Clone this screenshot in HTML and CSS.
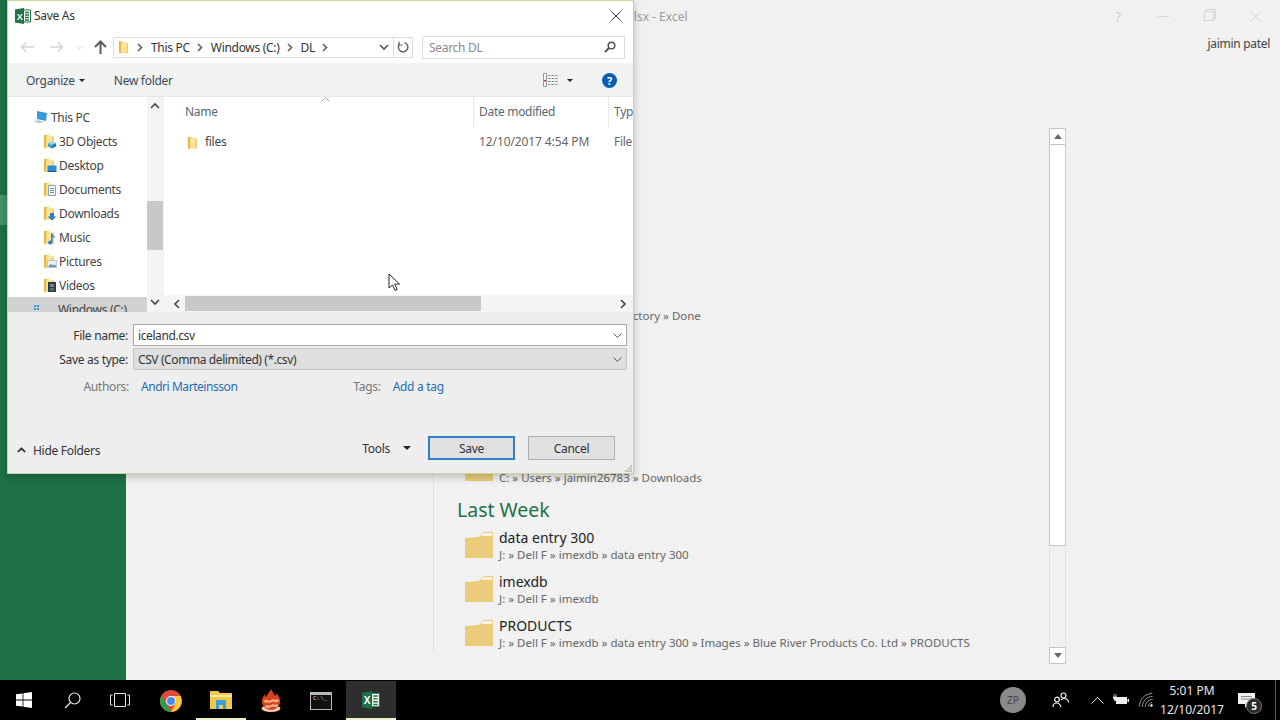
FILE: index.html
```html
<!DOCTYPE html>
<html lang="en">
<head>
    <meta charset="UTF-8">
    <title>Save As</title>
    <link rel="stylesheet" href="styles.css">
</head>
<body>

    <svg class="defs" width="0" height="0">
        <symbol id="folder" viewBox="0 0 12 14">
            <path d="M1 1h5v1.500h5v11H1z" fill="#f3d06f"/>
            <path d="M1 1h2.500v12.500H1z" fill="#e6b84a"/>
            <path d="M3.500 2.500L9 1.500v11l-5.500 1z" fill="#fbe59c"/>
        </symbol>
        <symbol id="excel" viewBox="0 0 16 16">
            <path d="M6 2h9.500v12H6z" fill="#fff" stroke="#1e7145"/>
            <path d="M10 4.500h4M10 7h4M10 9.500h4M10 12h4" stroke="#1e7145" stroke-width="1.300"/>
            <path d="M0 1.500L9 0v16l-9-1.500z" fill="#1e7145"/>
            <text x="4.500" y="11.500" class="excel-x">X</text>
        </symbol>
        <symbol id="big-folder" viewBox="0 0 28 26">
            <path d="M0 6l14-1 5-5h9v26H0z" fill="#eccb7b"/>
            <path d="M19 1h8v3h-11z" fill="#f9f3e2"/>
        </symbol>
        <symbol id="chev" viewBox="0 0 6 9">
            <path d="M1 1l3.500 3.500L1 8" fill="none" stroke="#666" stroke-width="1.700"/>
        </symbol>
    </svg>

    <div class="excel">
        <aside class="sidebar">
            <div class="sidebar-active"></div>
        </aside>
        <div class="backstage">
            <div class="titlebar">
                <span class="doc-title">iceland.xlsx - Excel</span>
                <div class="window-btns">
                    <span class="win-help">?</span>
                    <span class="win-min"></span>
                    <span class="win-max"></span>
                    <svg width="13" height="13" viewBox="0 0 13 13"><path d="M1 1l11 11M12 1L1 12" stroke="#d4d4d4"/></svg>
                </div>
            </div>
            <div class="account">jaimin patel</div>
            <div class="recent">
                <div class="recent-list">
                    <div class="recent-item first-item">
                        <svg class="big-icon" width="28" height="26"><use href="#big-folder"/></svg>
                        <div>
                            <div class="recent-name">Done</div>
                            <div class="recent-path">J: » Dell F » imexdb » Directory » Done</div>
                        </div>
                    </div>
                    <div class="recent-item downloads-item">
                        <svg class="big-icon" width="28" height="26"><use href="#big-folder"/></svg>
                        <div>
                            <div class="recent-name">Downloads</div>
                            <div class="recent-path">C: » Users » jaimin26783 » Downloads</div>
                        </div>
                    </div>
                    <h2 class="recent-head">Last Week</h2>
                    <div class="recent-item">
                        <svg class="big-icon" width="28" height="26"><use href="#big-folder"/></svg>
                        <div>
                            <div class="recent-name">data entry 300</div>
                            <div class="recent-path">J: » Dell F » imexdb » data entry 300</div>
                        </div>
                    </div>
                    <div class="recent-item">
                        <svg class="big-icon" width="28" height="26"><use href="#big-folder"/></svg>
                        <div>
                            <div class="recent-name">imexdb</div>
                            <div class="recent-path">J: » Dell F » imexdb</div>
                        </div>
                    </div>
                    <div class="recent-item">
                        <svg class="big-icon" width="28" height="26"><use href="#big-folder"/></svg>
                        <div>
                            <div class="recent-name">PRODUCTS</div>
                            <div class="recent-path">J: » Dell F » imexdb » data entry 300 » Images » Blue River Products Co. Ltd » PRODUCTS</div>
                        </div>
                    </div>
                </div>
                <div class="vscroll">
                    <div class="vscroll-btn"><span class="tri-up"></span></div>
                    <div class="vscroll-thumb"></div>
                    <div class="vscroll-track"></div>
                    <div class="vscroll-btn"><span class="tri-down"></span></div>
                </div>
            </div>
        </div>
    </div>

    <!-- save dialog -->
    <div class="dialog">
        <div class="dlg-title">
            <svg class="dlg-icon" width="16" height="16"><use href="#excel"/></svg>
            <span>Save As</span>
            <svg class="dlg-close" width="12" height="12" viewBox="0 0 12 12"><path d="M.5.500l11 11M11.500.500l-11 11" stroke="#444"/></svg>
        </div>

        <div class="dlg-nav">
            <svg class="nav-arrow" width="14" height="12" viewBox="0 0 14 12"><path d="M14 6H1.500M6 1.500L1.500 6 6 10.500" fill="none" stroke="#d3d3d3" stroke-width="1.500"/></svg>
            <svg class="nav-arrow next" width="14" height="12" viewBox="0 0 14 12"><path d="M0 6h12.500M8 1.500L12.500 6 8 10.500" fill="none" stroke="#d3d3d3" stroke-width="1.500"/></svg>
            <svg class="nav-recent" width="7" height="5" viewBox="0 0 7 5"><path d="M.5 1l3 3 3-3" fill="none" stroke="#d8d8d8"/></svg>
            <svg class="nav-up" width="13" height="14" viewBox="0 0 13 14"><path d="M6.500 14V2M1 7l5.500-5.500L12 7" fill="none" stroke="#5b5b5b" stroke-width="2"/></svg>
            <div class="address">
                <svg class="addr-folder" width="11" height="14"><use href="#folder"/></svg>
                <svg class="crumb-sep first" width="6" height="9"><use href="#chev"/></svg>
                <span class="crumb">This PC</span>
                <svg class="crumb-sep" width="6" height="9"><use href="#chev"/></svg>
                <span class="crumb">Windows (C:)</span>
                <svg class="crumb-sep" width="6" height="9"><use href="#chev"/></svg>
                <span class="crumb">DL</span>
                <svg class="crumb-sep" width="6" height="9"><use href="#chev"/></svg>
                <svg class="addr-drop" width="10" height="7" viewBox="0 0 10 7"><path d="M1 1l4 4 4-4" fill="none" stroke="#555" stroke-width="1.600"/></svg>
                <div class="addr-refresh">
                    <svg width="12" height="12" viewBox="0 0 12 12"><path d="M7.500 1.600A4.700 4.700 0 1 1 2.600 3" fill="none" stroke="#666" stroke-width="1.500"/><path d="M2 .500v3.500h3.500" fill="none" stroke="#666" stroke-width="1.200"/></svg>
                </div>
            </div>
            <div class="search">
                <span>Search DL</span>
                <svg width="12" height="12" viewBox="0 0 12 12"><circle cx="7.500" cy="4.500" r="3.300" fill="none" stroke="#555" stroke-width="1.500"/><path d="M5 7l-4 4" stroke="#555" stroke-width="2"/></svg>
            </div>
        </div>

        <div class="dlg-toolbar">
            <span class="tool-item">Organize</span>
            <span class="caret organize-caret"></span>
            <span class="tool-item new-folder">New folder</span>
            <svg class="view-icon" width="15" height="14" viewBox="0 0 15 14"><path d="M5 2.500h10M5 5.500h10M5 8.500h10M5 11.500h10" stroke="#8c9096" stroke-dasharray="2.500 1"/><path d="M.5.500h3v13h-3z" fill="#f6f6f6" stroke="#9a9a9a"/><path d="M1 7h2v1.500H1z" fill="#c0392b"/></svg>
            <span class="caret view-caret"></span>
            <span class="help">?</span>
        </div>

        <div class="dlg-body">
            <div class="tree-wrap">
                <div class="tree">
                    <div class="tree-item root">
                        <svg width="15" height="14" viewBox="0 0 15 14"><path d="M4 1l10 2-1 8-9-2z" fill="#3a9ad9"/><path d="M0 11l6-1 5 2-5 1.500z" fill="#c6ccd2"/></svg>
                        <span>This PC</span>
                    </div>
                    <div class="tree-item">
                        <svg width="14" height="15" viewBox="0 0 14 15"><use href="#folder" width="12" height="14"/><path d="M5 9l4-2 4 2-4 2z" fill="#8fdcf0"/><path d="M5 9l4 2v3.500l-4-2z" fill="#37a6cf"/><path d="M13 9l-4 2v3.500l4-2z" fill="#1c7eb2"/></svg>
                        <span>3D Objects</span>
                    </div>
                    <div class="tree-item">
                        <svg width="14" height="15" viewBox="0 0 14 15"><use href="#folder" width="12" height="14"/><path d="M4.500 7.500h9v5.500h-9z" fill="#2b8fd8"/><path d="M4.500 13h9v1h-9z" fill="#234f70"/></svg>
                        <span>Desktop</span>
                    </div>
                    <div class="tree-item">
                        <svg width="14" height="15" viewBox="0 0 14 15"><use href="#folder" width="12" height="14"/><path d="M5.500 3.500h7v10h-7z" fill="#eef4f7" stroke="#8aa2b2"/><path d="M7 6.500h4M7 8.500h4M7 10.500h4" stroke="#6d93ad"/></svg>
                        <span>Documents</span>
                    </div>
                    <div class="tree-item">
                        <svg width="14" height="15" viewBox="0 0 14 15"><use href="#folder" width="12" height="14"/><path d="M7 7h4v3.500h2.500L9 14.500 4.500 10.500H7z" fill="#2f7fc8"/></svg>
                        <span>Downloads</span>
                    </div>
                    <div class="tree-item">
                        <svg width="14" height="15" viewBox="0 0 14 15"><use href="#folder" width="12" height="14"/><path d="M8 3.500h1.500c0 2 3 2.500 3 5-1-1.500-2-1.700-3-1.800V12.500a2.200 2 0 1 1-1.500-1.900z" fill="#2e86c8"/></svg>
                        <span>Music</span>
                    </div>
                    <div class="tree-item">
                        <svg width="14" height="15" viewBox="0 0 14 15"><use href="#folder" width="12" height="14"/><path d="M4.500 6.500h9v7h-9z" fill="#e8f0f4" stroke="#9fb2bd" stroke-width=".6"/><path d="M5 13l3-3 2 1.500 1.500-1 1.500 1.500v1z" fill="#5c94b8"/></svg>
                        <span>Pictures</span>
                    </div>
                    <div class="tree-item">
                        <svg width="14" height="15" viewBox="0 0 14 15"><use href="#folder" width="12" height="14"/><path d="M5 4h8v10H5z" fill="#2f3c46"/><path d="M7 6h4v3H7z" fill="#6f8797"/><path d="M7 10h4v2.500H7z" fill="#56707f"/></svg>
                        <span>Videos</span>
                    </div>
                    <div class="tree-item selected">
                        <svg class="drive" width="21" height="12" viewBox="0 0 21 12"><path d="M1 2h2v2H1zM4 2h2v2H4zM1 5h2v2H1zM4 5h2v2H4z" fill="#2aa0e0"/><path d="M13 9h7v2h-7z" fill="#a9a9a9"/></svg>
                        <span>Windows (C:)</span>
                    </div>
                </div>
                <div class="tree-scroll">
                    <svg width="10" height="7" viewBox="0 0 10 7"><path d="M1 6l4-4 4 4" fill="none" stroke="#444" stroke-width="1.600"/></svg>
                    <div class="tree-thumb"></div>
                    <svg width="10" height="7" viewBox="0 0 10 7"><path d="M1 1l4 4 4-4" fill="none" stroke="#444" stroke-width="1.600"/></svg>
                </div>
            </div>
            <div class="files">
                <div class="files-head">
                    <div class="col col-name">Name<svg class="sort" width="9" height="5" viewBox="0 0 9 5"><path d="M.5 4.500l4-4 4 4" fill="none" stroke="#aaa"/></svg></div>
                    <div class="col col-date">Date modified</div>
                    <div class="col col-type">Type</div>
                </div>
                <div class="file-row">
                    <div class="col col-name file-name"><svg width="11" height="13"><use href="#folder"/></svg><span>files</span></div>
                    <div class="col col-date">12/10/2017 4:54 PM</div>
                    <div class="col col-type">File folder</div>
                </div>
                <div class="hscroll">
                    <svg width="7" height="10" viewBox="0 0 7 10"><path d="M6 1L2 5l4 4" fill="none" stroke="#444" stroke-width="1.600"/></svg>
                    <div class="hscroll-thumb"></div>
                    <svg width="7" height="10" viewBox="0 0 7 10"><path d="M1 1l4 4-4 4" fill="none" stroke="#444" stroke-width="1.600"/></svg>
                </div>
            </div>
        </div>

        <div class="dlg-form">
            <div class="form-row">
                <label>File name:</label>
                <div class="field"><span>iceland.csv</span><svg width="9" height="5" viewBox="0 0 9 5"><path d="M.5.500l4 4 4-4" fill="none" stroke="#555"/></svg></div>
            </div>
            <div class="form-row">
                <label>Save as type:</label>
                <div class="field type-field"><span>CSV (Comma delimited) (*.csv)</span><svg width="9" height="5" viewBox="0 0 9 5"><path d="M.5.500l4 4 4-4" fill="none" stroke="#555"/></svg></div>
            </div>
            <div class="meta-row">
                <span class="meta-label authors">Authors:</span>
                <a class="meta-link">Andri Marteinsson</a>
                <span class="meta-label tags">Tags:</span>
                <a class="meta-link">Add a tag</a>
            </div>
            <div class="dlg-foot">
                <svg class="hide-caret" width="9" height="6" viewBox="0 0 9 6"><path d="M.8 5l3.700-3.500L8.200 5" fill="none" stroke="#222" stroke-width="1.700"/></svg>
                <span class="hide-label">Hide Folders</span>
                <span class="tools">Tools</span>
                <span class="caret tools-caret"></span>
                <button class="btn btn-save">Save</button>
                <button class="btn">Cancel</button>
            </div>
            <svg class="grip" width="7" height="7" viewBox="0 0 7 7"><path d="M5 0h2v2H5zM2.500 2.500h2v2h-2zM5 2.500h2v2H5zM0 5h2v2H0zM2.500 5h2v2h-2zM5 5h2v2H5z" fill="#bdbdbd"/></svg>
        </div>
    </div>

    <!-- mouse pointer -->
    <svg class="pointer" width="13" height="19" viewBox="0 0 13 19"><path d="M1 1v14l3.500-3 2.500 5.500 2.200-1-2.500-5.300 4.800-.2z" fill="#fff" stroke="#222"/></svg>

    <div class="taskbar">
        <div class="task-btn">
            <svg width="16" height="16" viewBox="0 0 16 16"><path d="M0 2.300L6.600 1.400V7.600H0zM7.400 1.300L16 0V7.600H7.400zM0 8.400H6.600V14.600L0 13.700zM7.400 8.400H16V16L7.400 14.700z" fill="#fff"/></svg>
        </div>
        <div class="task-btn">
            <svg width="17" height="17" viewBox="0 0 17 17"><circle cx="10.500" cy="6.500" r="5.500" fill="none" stroke="#e8e8e8" stroke-width="1.200"/><path d="M6.500 10.500L1 16" stroke="#e8e8e8" stroke-width="1.300"/></svg>
        </div>
        <div class="task-btn">
            <svg width="20" height="14" viewBox="0 0 20 14"><path d="M4.500.500h11v13h-11z" fill="none" stroke="#e8e8e8"/><path d="M2.500 2H.500v10h2M17.500 2h2v10h-2" fill="none" stroke="#e8e8e8"/></svg>
        </div>
        <div class="task-app chrome">
            <svg width="22" height="22" viewBox="0 0 22 22">
                <circle cx="11" cy="11" r="11" fill="#de4b3c"/>
                <path d="M1.500 5.500L7 15l4 7A11 11 0 0 1 1.500 5.500z" fill="#2d9e4b"/>
                <path d="M11 6h9.500A11 11 0 0 1 11 22l5-9z" fill="#fbc934"/>
                <circle cx="11" cy="11" r="5" fill="#fff"/>
                <circle cx="11" cy="11" r="4" fill="#4a8af4"/>
            </svg>
        </div>
        <div class="task-app running">
            <svg width="22" height="18" viewBox="0 0 22 18">
                <path d="M0 0h8l2 2h12v16H0z" fill="#f2c84b"/>
                <path d="M0 4h22v2H0z" fill="#fbe8a2"/>
                <path d="M6 9h10v9h-3v-4H9v4H6z" fill="#3aa0dc"/>
            </svg>
        </div>
        <div class="task-app">
            <svg width="20" height="23" viewBox="0 0 20 23">
                <ellipse cx="10" cy="19.500" rx="9.500" ry="3.500" fill="#f3c9b4"/>
                <path d="M10 0c1 3 3 4 4 7 1-1 2-2 2-3 2 4 4 7 3 10-1 4-5 7-9 7s-8-3-9-7c-1-3 1-6 3-9 0 1 0 2 1 3 1-3 4-5 5-8z" fill="#d8431f"/>
                <path d="M3 12c3-3 4 1 7-1s4 1 7-1l1 2c-3 3-5-1-8 1s-4-1-6 1zM4 17c3-2 4 1 6-1s4 1 6-1l1 2c-3 2-5 0-7 1-2 2-3 0-5 1z" fill="#f7b48c"/>
            </svg>
        </div>
        <div class="task-app">
            <div class="cmd-icon"><span>C:\_</span></div>
        </div>
        <div class="task-app running active">
            <svg width="22" height="18" viewBox="0 0 16 16"><use href="#excel"/></svg>
        </div>

        <div class="tray">
            <div class="avatar">ZP</div>
            <svg class="tray-people" width="18" height="16" viewBox="0 0 18 16"><circle cx="11.500" cy="3.500" r="2.500" fill="none" stroke="#eee" stroke-width="1.200"/><circle cx="5" cy="7.500" r="2.300" fill="none" stroke="#eee" stroke-width="1.200"/><path d="M1 15c0-3 2-4 4-4s3 1 4 4M9 8c1-1 2-1.500 3-1.500 2 0 4 1 5 4" fill="none" stroke="#eee" stroke-width="1.200"/></svg>
            <svg class="tray-chevron" width="13" height="7" viewBox="0 0 13 7"><path d="M.5 6.500l6-6 6 6" fill="none" stroke="#e8e8e8"/></svg>
            <svg class="tray-battery" width="16" height="12" viewBox="0 0 16 12"><path d="M3 3h11v7H3z" fill="#eee"/><path d="M14.500 5h1.500v3h-1.500z" fill="#eee"/><path d="M1 0v3M3 0v3M0 3h4v2l-2 2z" stroke="#eee" fill="#eee" stroke-width=".7"/></svg>
            <svg class="tray-wifi" width="14" height="14" viewBox="0 0 14 14"><path d="M.500 13.500A13 13 0 0 1 13.500.500M3.500 13.500a10 10 0 0 1 10-10M6.500 13.500a7 7 0 0 1 7-7M9.500 13.500a4 4 0 0 1 4-4" fill="none" stroke="#cfcfcf" stroke-dasharray="1.500 .5"/><circle cx="12.500" cy="12.500" r="1.200" fill="#fff"/></svg>
            <div class="clock">
                <div>5:01 PM</div>
                <div>12/10/2017</div>
            </div>
            <div class="notify">
                <svg width="17" height="15" viewBox="0 0 17 15"><path d="M0 0h17v11h-7l-3 4v-4H0z" fill="#f2f2f2"/><path d="M3 3.500h11M3 6h11" stroke="#888"/></svg>
                <span class="notify-count">5</span>
            </div>
            <div class="show-desktop"></div>
        </div>
    </div>

</body>
</html>
```

FILE: styles.css
```css
* {
    box-sizing: border-box;
}

html,
body {
    margin: 0;
    padding: 0;
    width: 1280px;
    height: 720px;
    overflow: hidden;
}

body {
    position: relative;
    font-family: "Noto Sans", "Open Sans", sans-serif;
    font-size: 12px;
    color: #333;
    background-color: #f1f1f1;
}

.defs {
    position: absolute;
}

.excel-x {
    font-family: "Liberation Sans", sans-serif;
    font-size: 9px;
    font-weight: bold;
    fill: #fff;
    text-anchor: middle;
}

/* excel window behind the dialog */
.excel {
    display: flex;
    height: 680px;
}

.sidebar {
    flex: none;
    width: 126px;
    padding-top: 195px;
    background-color: #1e7145;
}

.sidebar-active {
    width: 7px;
    height: 30px;
    background-color: #439467;
}

.backstage {
    flex: 1;
    min-width: 0;
    display: flex;
    flex-direction: column;
}

.titlebar {
    flex: none;
    display: flex;
    align-items: center;
    height: 32px;
    padding-left: 458px;
    font-size: 12px;
    color: #9a9a9a;
}

.window-btns {
    display: flex;
    align-items: center;
    margin-left: auto;
    padding-right: 18px;
    gap: 35px;
}

.win-help {
    margin-right: 2px;
    font-size: 14px;
    color: #d4d4d4;
}

.win-min {
    width: 11px;
    border-top: 1px solid #d4d4d4;
}

.win-max {
    width: 10px;
    height: 10px;
    border: 1px solid #d4d4d4;
    box-shadow: 2px -2px 0 -1px #f1f1f1, 2px -2px 0 0 #d4d4d4;
}

.account {
    flex: none;
    height: 24px;
    padding-right: 10px;
    text-align: right;
    font-size: 12px;
    letter-spacing: -0.3px;
    line-height: 23px;
    color: #444;
}

.recent {
    flex: 1;
    min-height: 0;
    display: flex;
    align-items: flex-start;
    padding-top: 72px;
}

.recent-list {
    width: 600px;
    height: 524px;
    margin-left: 307px;
    padding-left: 23px;
    border-left: 1px solid #e2e2e2;
}

.recent-item {
    display: flex;
    gap: 6px;
    height: 44px;
    padding-left: 8px;
    padding-top: 4px;
}

.first-item {
    margin-top: 158px;
}

.downloads-item {
    margin-top: 118px;
}

.big-icon {
    flex: none;
    margin-top: 3px;
}

.recent-name {
    font-size: 14px;
    line-height: 18px;
    color: #222;
}

.recent-path {
    font-size: 11.500px;
    line-height: 16px;
    color: #666;
    white-space: nowrap;
}

.recent-head {
    margin: 5px 0 2px;
    font-size: 19.500px;
    line-height: 26px;
    font-weight: normal;
    color: #1e7145;
}

.vscroll {
    position: absolute;
    left: 1049px;
    top: 128px;
    width: 17px;
    height: 536px;
    display: flex;
    flex-direction: column;
}

.vscroll-btn {
    height: 17px;
    display: flex;
    align-items: center;
    justify-content: center;
    background-color: #fff;
    border: 1px solid #c6c6c6;
}

.vscroll-thumb {
    height: 401px;
    background-color: #fff;
    border: 1px solid #c6c6c6;
    border-top: 0;
}

.vscroll-track {
    flex: 1;
    background-color: #f1f1f1;
    border-left: 1px solid #e4e4e4;
    border-right: 1px solid #e4e4e4;
}

.tri-up {
    border: 4px solid transparent;
    border-top: 0;
    border-bottom: 5px solid #666;
}

.tri-down {
    border: 4px solid transparent;
    border-bottom: 0;
    border-top: 5px solid #666;
}

/* dialog */
.dialog {
    position: absolute;
    left: 7px;
    top: 0;
    width: 627px;
    height: 474px;
    display: flex;
    flex-direction: column;
    background-color: #fff;
    border: 1px solid #c8d59c;
    box-shadow: 0 3px 8px rgba(0, 0, 0, 0.22);
    letter-spacing: -0.3px;
}

.dlg-title {
    display: flex;
    align-items: center;
    height: 30px;
    padding: 0 11px 1px 7px;
    font-size: 12px;
    color: #333;
}

.dlg-icon {
    margin-right: 3px;
}

.dlg-close {
    margin-left: auto;
}

.dlg-nav {
    display: flex;
    align-items: center;
    height: 32px;
    padding-left: 12px;
}

.nav-arrow.next {
    margin-left: 16px;
}

.nav-recent {
    margin-left: 12px;
}

.nav-up {
    margin-left: 11px;
}

.address {
    display: flex;
    align-items: center;
    width: 300px;
    height: 21px;
    margin-left: 6px;
    padding-left: 4px;
    border: 1px solid #dcdcdc;
    font-size: 12px;
    color: #333;
}

.addr-folder {
    flex: none;
}

.crumb-sep {
    flex: none;
    margin: 0 8px 0 7px;
}

.crumb-sep.first {
    margin-left: 8px;
}

.addr-drop {
    margin-left: auto;
    margin-right: 4px;
}

.addr-refresh {
    display: flex;
    align-items: center;
    justify-content: center;
    width: 19px;
    height: 100%;
    border-left: 1px solid #dcdcdc;
}

.search {
    display: flex;
    align-items: center;
    justify-content: space-between;
    width: 203px;
    height: 23px;
    margin-left: 9px;
    padding: 0 8px 0 6px;
    border: 1px solid #dcdcdc;
    font-size: 12px;
    color: #8a8a8a;
}

.dlg-toolbar {
    display: flex;
    align-items: center;
    height: 34px;
    padding: 1px 16px 0 18px;
    background-color: #f1f3f1;
    border-bottom: 1px solid #e6e8e6;
    color: #3a4a5a;
}

.tool-item {
    font-size: 12px;
}

.new-folder {
    margin-left: 29px;
}

.caret {
    width: 0;
    height: 0;
    border: 3px solid transparent;
    border-bottom: 0;
    border-top: 3px solid #222;
}

.organize-caret {
    margin-left: 4px;
}

.view-icon {
    margin-left: auto;
}

.view-caret {
    margin-left: 9px;
}

.help {
    display: flex;
    align-items: center;
    justify-content: center;
    width: 15px;
    height: 15px;
    margin-left: 29px;
    border-radius: 50%;
    background-color: #0a5eb0;
    color: #fff;
    font-size: 11px;
    font-weight: bold;
}

.dlg-body {
    display: flex;
    height: 215px;
}

.tree-wrap {
    display: flex;
    flex: none;
    width: 156px;
}

.tree {
    width: 139px;
    height: 215px;
    overflow: hidden;
    padding-top: 8px;
    color: #444;
}

.tree-item {
    display: flex;
    align-items: center;
    height: 24px;
    padding-left: 35px;
    gap: 2px;
    font-size: 12px;
    white-space: nowrap;
}

.tree-item.root {
    padding-left: 25px;
    gap: 3px;
}

.tree-item.selected {
    background-color: #d1d1d1;
    padding-left: 25px;
    gap: 4px;
}

.tree-scroll {
    width: 17px;
    height: 215px;
    display: flex;
    flex-direction: column;
    align-items: center;
    justify-content: space-between;
    padding: 5px 1px 6px 0;
    background-color: #f4f4f4;
    position: relative;
}

.tree-thumb {
    position: absolute;
    left: 0;
    top: 104px;
    width: 16px;
    height: 49px;
    background-color: #c8c8c8;
}

.files {
    flex: 1;
    min-width: 0;
    position: relative;
    overflow: hidden;
}

.files-head {
    display: flex;
    height: 30px;
    align-items: stretch;
}

.col {
    flex: none;
    white-space: nowrap;
}

.col-name {
    width: 309px;
    padding-left: 21px;
    line-height: 30px;
}

.col-date {
    width: 135px;
    padding-left: 6px;
    line-height: 30px;
}

.col-type {
    width: 40px;
    padding-left: 6px;
    line-height: 30px;
}

.files-head .col {
    color: #5a6672;
    font-size: 12px;
}

.files-head .col-date,
.files-head .col-type {
    padding-left: 5px;
    border-left: 1px solid #e8e8e8;
}

.sort {
    position: absolute;
    left: 157px;
    top: 0;
}

.file-row {
    display: flex;
    height: 30px;
    font-size: 12px;
    color: #666;
}

.file-row .col-date {
    letter-spacing: -0.1px;
}

.file-name {
    display: flex;
    align-items: center;
    gap: 7px;
    padding-left: 23px;
    color: #444;
}

.hscroll {
    position: absolute;
    left: 0;
    right: 0;
    bottom: 0;
    height: 17px;
    display: flex;
    align-items: center;
    justify-content: space-between;
    padding: 0 6px 0 9px;
    background-color: #f4f4f4;
}

.hscroll-thumb {
    position: absolute;
    left: 21px;
    top: 1px;
    width: 296px;
    height: 15px;
    background-color: #c8c8c8;
}

.dlg-form {
    flex: 1;
    position: relative;
    padding-top: 11px;
    background-color: #eeeeee;
}

.form-row {
    display: flex;
    align-items: center;
    height: 24px;
}

.form-row label {
    width: 125px;
    text-align: right;
    padding-right: 5px;
    font-size: 12px;
    color: #333;
}

.field {
    display: flex;
    align-items: center;
    justify-content: space-between;
    width: 494px;
    height: 22px;
    padding: 0 4px;
    background-color: #fff;
    border: 1px solid #a8a8a8;
    font-size: 12px;
    letter-spacing: -0.4px;
    color: #333;
}

.type-field {
    background-color: #dfdfdf;
    border-color: #c4c4c4;
}

.meta-row {
    display: flex;
    align-items: center;
    height: 20px;
    margin-top: 5px;
    font-size: 12px;
}

.meta-label {
    color: #777;
}

.authors {
    width: 121px;
    text-align: right;
}

.meta-link {
    margin-left: 12px;
    color: #1f6db0;
}

.meta-row .meta-link:nth-child(2) {
    letter-spacing: -0.45px;
}

.tags {
    margin-left: 116px;
}

.dlg-foot {
    display: flex;
    align-items: center;
    height: 24px;
    margin-top: 40px;
    padding: 0 18px 0 9px;
    font-size: 12px;
    color: #333;
}

.hide-caret {
    margin-top: 4px;
}

.hide-label {
    margin-top: 4px;
    margin-left: 7px;
}

.tools {
    margin-left: auto;
}

.tools-caret {
    margin-left: 13px;
    border-width: 4px;
    border-bottom: 0;
}

.btn {
    width: 87px;
    height: 24px;
    padding: 0;
    margin-left: 13px;
    font-family: inherit;
    font-size: 12px;
    letter-spacing: inherit;
    color: #333;
    background-color: #e1e1e1;
    border: 1px solid #adadad;
}

.btn-save {
    margin-left: 17px;
    border: 2px solid #2f7fc8;
}

.grip {
    position: absolute;
    right: 1px;
    bottom: 1px;
}

.pointer {
    position: absolute;
    left: 388px;
    top: 273px;
}

/* taskbar */
.taskbar {
    display: flex;
    height: 40px;
    background-color: #000;
}

.task-btn {
    display: flex;
    align-items: center;
    justify-content: center;
    width: 48px;
}

.task-app {
    display: flex;
    align-items: center;
    justify-content: center;
    width: 50px;
    padding-top: 1px;
}

.chrome {
    margin-left: 2px;
}

.running {
    border-bottom: 2px solid #e9f2c8;
}

.active {
    background-color: #2e2e2e;
    margin-top: 1px;
}

.cmd-icon {
    width: 22px;
    height: 18px;
    padding-left: 2px;
    background-color: #111;
    border: 1px solid #bbb;
    border-top-width: 3px;
    font-family: "Liberation Mono", monospace;
    font-size: 6px;
    line-height: 7px;
    color: #ccc;
}

.tray {
    display: flex;
    align-items: center;
    margin-left: auto;
    color: #e8e8e8;
}

.avatar {
    display: flex;
    align-items: center;
    justify-content: center;
    width: 26px;
    height: 26px;
    border-radius: 50%;
    background-color: #8a8a8a;
    font-size: 10px;
    color: #444;
}

.tray-people {
    margin-left: 26px;
}

.tray-chevron {
    margin-left: 21px;
}

.tray-battery {
    margin-left: 9px;
}

.tray-wifi {
    margin-left: 10px;
}

.clock {
    width: 70px;
    margin-left: 4px;
    text-align: center;
    font-size: 12px;
    line-height: 19px;
}

.notify {
    position: relative;
    display: flex;
    width: 22px;
    margin-left: 11px;
}

.notify-count {
    position: absolute;
    left: 8px;
    top: 5px;
    width: 16px;
    height: 16px;
    border-radius: 50%;
    background-color: #2a2a2a;
    border: 1px solid #777;
    text-align: center;
    font-size: 10px;
    font-weight: bold;
    line-height: 14px;
    color: #fff;
}

.show-desktop {
    width: 1px;
    height: 100%;
    margin-left: 15px;
    margin-right: 4px;
    background-color: #555;
}
```
